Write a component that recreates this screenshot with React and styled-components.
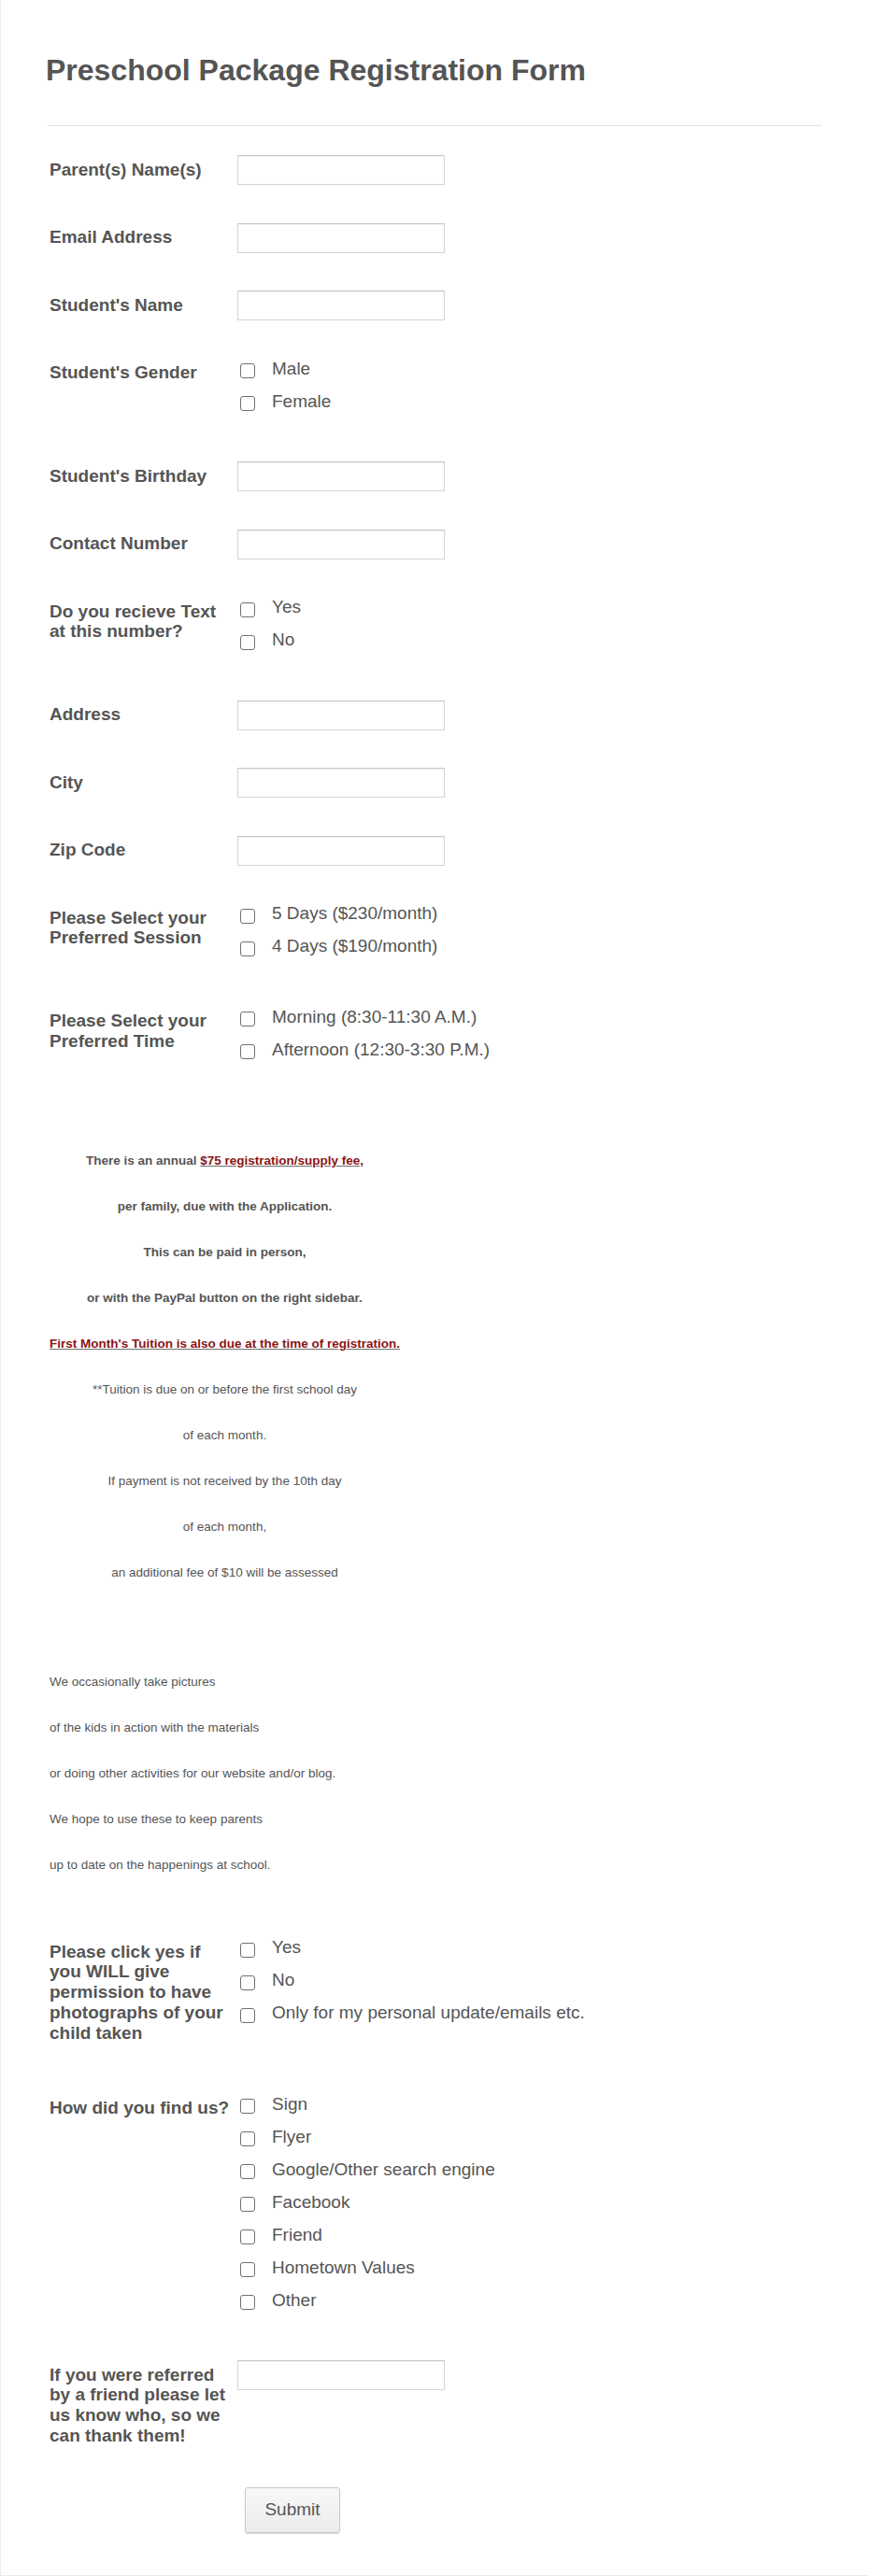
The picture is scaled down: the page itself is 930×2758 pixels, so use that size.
import React from "react";
import styled, { createGlobalStyle } from "styled-components";

const GlobalStyle = createGlobalStyle`
  html, body { margin: 0; padding: 0; background: #fff; }
  body { font-family: "Liberation Sans", Arial, Helvetica, sans-serif; color: #555; }
`;

const Page = styled.div`
  box-sizing: border-box;
  height: 2758px;
  border-left: 1px solid #ececec;
  border-bottom: 1px solid #ececec;
  padding: 56px 0 0 48px;
`;

const Title = styled.h1`
  margin: 0;
  font-size: 32px;
  line-height: 38px;
  font-weight: 700;
  color: #555;
`;

const Divider = styled.div`
  margin: 40px 0 0 2px;
  width: 829px;
  height: 1px;
  background: #e3e3e3;
`;

const Form = styled.form`
  margin-top: 31px;
  padding-left: 4px;
`;

const Row = styled.div`
  display: flex;
  align-items: flex-start;
  margin-bottom: ${(p) => (p.$gap != null ? p.$gap : 40.5)}px;
`;

const Label = styled.div`
  flex: none;
  width: 196px;
  margin-right: 5px;
  padding-top: 4.5px;
  font-size: 19px;
  line-height: 21.75px;
  font-weight: 700;
  color: #555;
`;

const TextInput = styled.input`
  box-sizing: border-box;
  width: 222px;
  height: 32px;
  margin: 0;
  padding: 4px 6px;
  border: 1px solid #d4d4d4;
  border-top-color: #c6c6c6;
  border-radius: 0;
  box-shadow: inset 0 1px 1px rgba(0, 0, 0, 0.05);
  background: #fff;
  font-family: inherit;
  font-size: 16px;
  color: #555;
`;

const Options = styled.div`
  display: flex;
  flex-direction: column;
`;

const Option = styled.label`
  display: flex;
  align-items: flex-start;
  height: 35px;
  font-size: 19px;
  line-height: 21.75px;
  color: #555;
  white-space: nowrap;
`;

const Check = styled.input.attrs({ type: "checkbox" })`
  appearance: none;
  -webkit-appearance: none;
  flex: none;
  box-sizing: border-box;
  width: 16px;
  height: 16px;
  margin: 5.5px 18px 0 3px;
  border: 1px solid #707070;
  border-radius: 3px;
  background: #fff;
`;

const Notice = styled.div`
  width: fit-content;
  text-align: ${(p) => p.$align};
  padding-top: ${(p) => p.$top}px;
  margin-bottom: ${(p) => p.$bottom}px;
  font-size: 13.5px;
  line-height: 49px;
  color: #555;
  white-space: nowrap;
`;

const NoticeLine = styled.div`
  font-weight: ${(p) => (p.$bold ? 700 : 400)};
`;

const Red = styled.span`
  color: #8b1414;
  text-decoration: underline;
  text-decoration-color: #6f6f6f;
`;

const SubmitRow = styled.div`
  display: flex;
  padding-left: 209px;
`;

const SubmitButton = styled.button`
  box-sizing: border-box;
  width: 102px;
  height: 49px;
  border: 1px solid #c8c8c8;
  border-radius: 3px;
  background: linear-gradient(#f8f8f8, #ebebeb);
  box-shadow: 0 1px 1px rgba(0, 0, 0, 0.15);
  font-family: inherit;
  font-size: 19px;
  color: #555;
  cursor: pointer;
`;

const InputRow = ({ label, gap }) => (
  <Row $gap={gap}>
    <Label>{label}</Label>
    <TextInput type="text" />
  </Row>
);

const CheckRow = ({ label, options, gap }) => (
  <Row $gap={gap}>
    <Label>{label}</Label>
    <Options>
      {options.map((o) => (
        <Option key={o}>
          <Check />
          {o}
        </Option>
      ))}
    </Options>
  </Row>
);

export default function App() {
  return (
    <>
      <GlobalStyle />
      <Page>
        <Title>Preschool Package Registration Form</Title>
        <Divider />
        <Form onSubmit={(e) => e.preventDefault()}>
          <InputRow label="Parent(s) Name(s)" />
          <InputRow label="Email Address" />
          <InputRow label="Student's Name" />
          <CheckRow label="Student's Gender" options={["Male", "Female"]} />
          <InputRow label="Student's Birthday" />
          <InputRow label="Contact Number" />
          <CheckRow label="Do you recieve Text at this number?" options={["Yes", "No"]} />
          <InputRow label="Address" />
          <InputRow label="City" />
          <InputRow label="Zip Code" />
          <CheckRow
            label="Please Select your Preferred Session"
            options={["5 Days ($230/month)", "4 Days ($190/month)"]}
          />
          <CheckRow
            label="Please Select your Preferred Time"
            options={["Morning (8:30-11:30 A.M.)", "Afternoon (12:30-3:30 P.M.)"]}
          />

          <Notice $align="center" $top={30} $bottom={68}>
            <NoticeLine $bold>
              There is an annual <Red>$75 registration/supply fee,</Red>
            </NoticeLine>
            <NoticeLine $bold>per family, due with the Application.</NoticeLine>
            <NoticeLine $bold>This can be paid in person,</NoticeLine>
            <NoticeLine $bold>or with the PayPal button on the right sidebar.</NoticeLine>
            <NoticeLine $bold>
              <Red>First Month's Tuition is also due at the time of registration.</Red>
            </NoticeLine>
            <NoticeLine>**Tuition is due on or before the first school day</NoticeLine>
            <NoticeLine>of each month.</NoticeLine>
            <NoticeLine>If payment is not received by the 10th day</NoticeLine>
            <NoticeLine>of each month,</NoticeLine>
            <NoticeLine>an additional fee of $10 will be assessed</NoticeLine>
          </Notice>

          <Notice $align="left" $top={0} $bottom={53}>
            <NoticeLine>We occasionally take pictures</NoticeLine>
            <NoticeLine>of the kids in action with the materials</NoticeLine>
            <NoticeLine>or doing other activities for our website and/or blog.</NoticeLine>
            <NoticeLine>We hope to use these to keep parents</NoticeLine>
            <NoticeLine>up to date on the happenings at school.</NoticeLine>
          </Notice>

          <CheckRow
            label="Please click yes if you WILL give permission to have photographs of your child taken"
            options={["Yes", "No", "Only for my personal update/emails etc."]}
            gap={54.25}
          />
          <CheckRow
            label="How did you find us?"
            options={[
              "Sign",
              "Flyer",
              "Google/Other search engine",
              "Facebook",
              "Friend",
              "Hometown Values",
              "Other",
            ]}
          />
          <InputRow
            label="If you were referred by a friend please let us know who, so we can thank them!"
            gap={44}
          />
          <SubmitRow>
            <SubmitButton type="submit">Submit</SubmitButton>
          </SubmitRow>
        </Form>
      </Page>
    </>
  );
}
